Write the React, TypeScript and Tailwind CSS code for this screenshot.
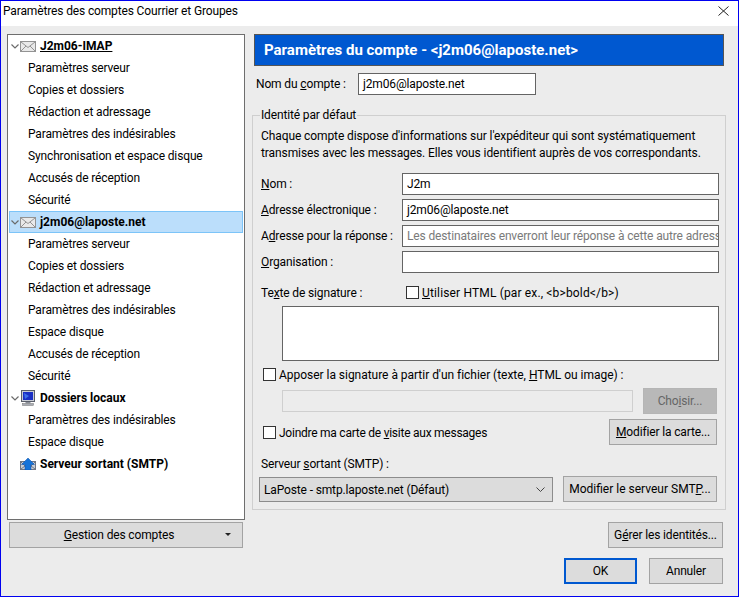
import type { ReactNode } from 'react'

const font = "font-['Roboto','Liberation_Sans',sans-serif]"

function Mail() {
	return (
		<svg width="16" height="11" viewBox="0 0 16 11" className="shrink-0">
			<rect x="0.5" y="0.5" width="15" height="10" fill="#e9e9e9" stroke="#939393" />
			<path d="M1 1l7 5.5L15 1M1 10l5-5M15 10l-5-5" fill="none" stroke="#939393" />
		</svg>
	)
}

function Monitor() {
	return (
		<svg width="14" height="16" viewBox="0 0 14 16" className="shrink-0">
			<rect x="0.5" y="0.5" width="13" height="11" fill="#c8ccd4" stroke="#5a5f6a" />
			<rect x="2" y="2" width="10" height="8" fill="#1a2fc4" />
			<path d="M3 3l5 3-4 3z" fill="#3f6fe8" />
			<rect x="4.5" y="12" width="5" height="1.5" fill="#8a8f98" />
			<rect x="1.5" y="13.5" width="11" height="2" fill="#a9adb5" stroke="#777" strokeWidth="0.5" />
		</svg>
	)
}

function Outgoing() {
	return (
		<svg width="16" height="12" viewBox="0 0 16 12" className="shrink-0">
			<rect x="0.5" y="3.5" width="15" height="8" fill="#c9ced6" stroke="#6f7683" />
			<path d="M1 4l4 4M15 4l-4 4M1 11l4-3M15 11l-4-3" stroke="#6f7683" fill="none" />
			<path d="M8 0l6.5 6.5H11V12H5V6.5H1.5z" fill="#1573d8" stroke="#0d4fa8" strokeWidth="0.5" />
		</svg>
	)
}

function Chevron() {
	return (
		<svg width="8" height="5" viewBox="0 0 8 5" className="shrink-0">
			<path d="M0.5 0.5L4 4l3.5-3.5" fill="none" stroke="#6b6b6b" strokeWidth="1.2" />
		</svg>
	)
}

function Heading({ icon, open, selected, underline, children }: { icon: ReactNode; open?: boolean; selected?: boolean; underline?: boolean; children: ReactNode }) {
	return (
		<div className={selected ? 'flex h-[22px] items-center border border-[#7cc4f8] bg-[#bbdefb]' : 'flex h-[22px] items-center border border-transparent'}>
			<span className="flex w-[10px] justify-start pl-px">{open && <Chevron />}</span>
			<span className="flex w-[16px] justify-center">{icon}</span>
			<span className={underline ? 'ml-[4px] font-bold tracking-normal underline' : 'ml-[4px] font-bold tracking-normal'}>{children}</span>
		</div>
	)
}

function Sub({ children }: { children: ReactNode }) {
	return <div className="flex h-[22px] items-center pl-[19px]">{children}</div>
}

function Btn({ className, children }: { className: string; children: ReactNode }) {
	return <div className={`flex items-center justify-center whitespace-nowrap border border-[#a3a3a3] bg-[#dcdcdc] ${className}`}>{children}</div>
}

function Check() {
	return <span className="block h-[13px] w-[13px] shrink-0 border border-[#333] bg-white" />
}

function Field({ label, children, className }: { label: ReactNode; children?: ReactNode; className?: string }) {
	return (
		<div className="flex h-[22px] items-center">
			<span className="w-[141px] shrink-0 whitespace-nowrap">{label}</span>
			<div className={`flex h-[22px] w-[317px] shrink-0 items-center overflow-hidden whitespace-nowrap border border-[#646464] bg-white px-[4px] ${className ?? ''}`}>{children}</div>
		</div>
	)
}

export default function App() {
	return (
		<div className={`flex h-[597px] w-[739px] flex-col overflow-hidden border border-[#0000f0] bg-[#ececec] text-[12px] leading-[16px] tracking-[-0.14px] text-black ${font}`}>
			<div className="flex h-[25px] shrink-0 items-center justify-between bg-white pb-[5px] pl-[2px] pr-[9px]">
				<span>Paramètres des comptes Courrier et Groupes</span>
				<svg width="11" height="10" viewBox="0 0 11 10">
					<path d="M0.5 0.5l10 9M10.5 0.5l-10 9" stroke="#222" fill="none" />
				</svg>
			</div>
			<div className="flex pl-[6px] pt-[8px]">
				<div className="w-[238px] shrink-0">
					<div className="h-[486px] border border-[#6e6e6e] bg-white pl-[1px] pr-[1px]">
						<Heading icon={<Mail />} open underline>J2m06-IMAP</Heading>
						<Sub>Paramètres serveur</Sub>
						<Sub>Copies et dossiers</Sub>
						<Sub>Rédaction et adressage</Sub>
						<Sub>Paramètres des indésirables</Sub>
						<Sub>Synchronisation et espace disque</Sub>
						<Sub>Accusés de réception</Sub>
						<Sub>Sécurité</Sub>
						<Heading icon={<Mail />} open selected>j2m06@laposte.net</Heading>
						<Sub>Paramètres serveur</Sub>
						<Sub>Copies et dossiers</Sub>
						<Sub>Rédaction et adressage</Sub>
						<Sub>Paramètres des indésirables</Sub>
						<Sub>Espace disque</Sub>
						<Sub>Accusés de réception</Sub>
						<Sub>Sécurité</Sub>
						<Heading icon={<Monitor />} open>Dossiers locaux</Heading>
						<Sub>Paramètres des indésirables</Sub>
						<Sub>Espace disque</Sub>
						<Heading icon={<Outgoing />}>Serveur sortant (SMTP)</Heading>
					</div>
					<div className="relative mx-[2px] mt-[2px] flex h-[26px] items-center justify-center border border-[#a3a3a3] bg-[#dcdcdc] pr-[14px]">
						<span><u>G</u>estion des comptes</span>
						<span className="absolute right-[11px] top-[10px] h-0 w-0 border-x-[3px] border-t-[3px] border-x-transparent border-t-[#222]" />
					</div>
				</div>
				<div className="ml-[7px] w-[475px] shrink-0">
					<div className="ml-[2px] flex h-[32px] w-[470px] items-center border border-[#555] bg-[#0058d0] pl-[9px] text-[15px] font-bold tracking-normal text-white">
						Paramètres du compte - &lt;j2m06@laposte.net&gt;
					</div>
					<div className="mt-[7px] flex h-[22px] items-center pl-[4px]">
						<span className="w-[102px] whitespace-nowrap">Nom du <u>c</u>ompte :</span>
						<div className="flex h-[22px] w-[178px] items-center border border-[#646464] bg-white px-[4px]">j2m06@laposte.net</div>
					</div>
					<div className="relative mt-[20px] h-[395px] w-[474px] border border-[#cfcfcf] pl-[8px] pr-[6px] pt-[12px]">
						<span className="absolute -top-[9px] left-[7px] bg-[#ececec] px-px">Identité par défaut</span>
						<p className="whitespace-nowrap leading-[17px] tracking-[-0.09px]">Chaque compte dispose d'informations sur l'expéditeur qui sont systématiquement<br />transmises avec les messages. Elles vous identifient auprès de vos correspondants.</p>
						<div className="mt-[11px] flex flex-col gap-[4px]">
							<Field label={<><u>N</u>om :</>}>J2m</Field>
							<Field label={<><u>A</u>dresse électronique :</>}>j2m06@laposte.net</Field>
							<Field label={<>A<u>d</u>resse pour la réponse :</>} className="text-[#7a7a7a]">Les destinataires enverront leur réponse à cette autre adresse</Field>
							<Field label={<><u>O</u>rganisation :</>} />
						</div>
						<div className="mt-[13px] flex h-[13px] items-center">
							<span className="w-[145px]">Te<u>x</u>te de signature :</span>
							<Check />
							<span className="ml-[3px] tracking-[0.15px]"><u>U</u>tiliser HTML (par ex., &lt;b&gt;bold&lt;/b&gt;)</span>
						</div>
						<div className="ml-[21px] mt-[7px] h-[55px] w-[437px] border border-[#646464] bg-white" />
						<div className="mt-[7px] flex h-[13px] items-center pl-[2px]">
							<Check />
							<span className="ml-[3px] tracking-[-0.03px]">Apposer la signature à partir d'un fichier (texte, <u>H</u>TML ou image) :</span>
						</div>
						<div className="mt-[7px] flex items-center">
							<div className="ml-[21px] h-[22px] w-[351px] border border-[#cfcfcf] bg-[#ececec]" />
							<Btn className="ml-[10px] h-[26px] w-[74px] !border-[#b5b5b5] !bg-[#b8b8b8] text-[#666]"><span>Cho<u>i</u>sir...</span></Btn>
						</div>
						<div className="mt-[5px] flex h-[26px] items-center pl-[2px]">
							<Check />
							<span className="ml-[3px] mt-[2px] tracking-[-0.25px]">Joindre ma carte de <u>v</u>isite aux messages</span>
							<Btn className="ml-auto mr-[2px] h-[26px] w-[108px]"><span><u>M</u>odifier la carte...</span></Btn>
						</div>
						<div className="mt-[11px] h-[16px]">Serveur <u>s</u>ortant (SMTP) :</div>
						<div className="-ml-[2px] mt-[4px] flex items-start">
							<div className="mt-px flex h-[25px] w-[294px] items-center justify-between border border-[#8c8c8c] bg-[#dcdcdc] pl-[4px] pr-[7px]">
								<span>LaPoste - smtp.laposte.net (Défaut)</span>
								<svg width="9" height="5" viewBox="0 0 9 5"><path d="M0.5 0.5l4 4 4-4" fill="none" stroke="#444" /></svg>
							</div>
							<Btn className="ml-[10px] h-[26px] w-[154px] tracking-normal"><span>Modifier le serveur SMT<u>P</u>...</span></Btn>
						</div>
					</div>
					<div className="ml-[356px] mt-[12px]">
						<Btn className="h-[26px] w-[115px]"><span>G<u>é</u>rer les identités...</span></Btn>
					</div>
					<div className="mt-[10px] flex justify-end pr-[4px]">
						<Btn className="h-[26px] w-[73px] !border-2 !border-[#0058d0]">OK</Btn>
						<Btn className="ml-[12px] h-[26px] w-[74px]">Annuler</Btn>
					</div>
				</div>
			</div>
		</div>
	)
}
